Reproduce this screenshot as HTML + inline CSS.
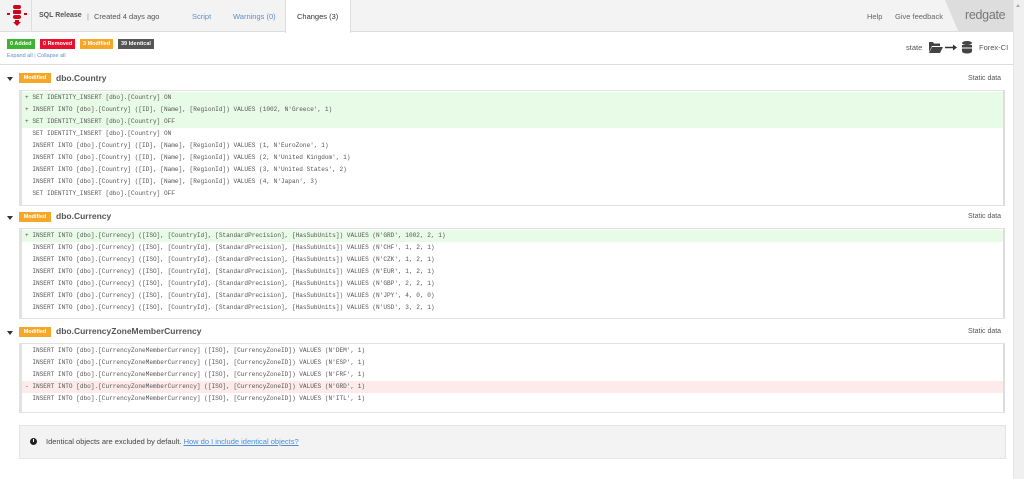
<!DOCTYPE html>
<html><head><meta charset="utf-8"><style>
*{margin:0;padding:0;box-sizing:border-box}
body{width:1024px;height:479px;overflow:hidden;background:#fff;font-family:"Liberation Sans",sans-serif;position:relative;color:#333}
.a{position:absolute}
.hdr{left:0;top:0;width:1013px;height:32px;background:#f3f3f3;border-bottom:1px solid #ddd}
.t{font-size:7.5px;white-space:nowrap}
.badge{position:absolute;top:39px;height:10px;font-size:5.5px;font-weight:bold;color:#fff;line-height:10px;padding:0 3px}
.mod{position:absolute;left:19px;background:#f7a728;color:#fff;font-size:5.5px;font-weight:bold;width:32px;height:10px;line-height:10px;text-align:center}
.name{position:absolute;left:56px;font-size:8.5px;font-weight:bold;color:#555}
.sd{position:absolute;font-size:7px;color:#555}
.tri{position:absolute;left:7px;width:0;height:0;border-left:3px solid transparent;border-right:3px solid transparent;border-top:4px solid #333}
.box{position:absolute;left:19px;width:986px;border:1px solid #e2e2e2;border-left:3px solid #e2e2e2;border-right:2px solid #ddd;padding-top:1px;font-family:"Liberation Mono",monospace;font-size:6.1px;color:#555}
.box div{height:12px;line-height:12px;padding-left:3px;white-space:pre}
.g{background:#e8fbe6}.r{background:#fdebeb}
</style></head><body>
<div class="a hdr"></div>
<div class="a" style="left:0;top:0;width:32px;height:32px;border-right:1px solid #ddd"></div>
<svg class="a" style="left:5px;top:3px" width="24" height="24" viewBox="0 0 24 24">
<rect x="8" y="2" width="8" height="4" rx="2" fill="#d0021b"/><rect x="8" y="7" width="8" height="4" rx="1" fill="#d0021b"/><rect x="8" y="12" width="8" height="4" rx="2" fill="#d0021b"/>
<rect x="2" y="10" width="3" height="2" fill="#d0021b"/><rect x="19" y="10" width="3" height="2" fill="#d0021b"/>
<path d="M10 17h4v2h2l-4 4-4-4h2z" fill="#d0021b"/></svg>
<div class="a t" style="left:39px;top:12px;font-weight:bold;color:#555;font-size:7px">SQL Release</div>
<div class="a t" style="left:87px;top:12px;color:#999">|</div>
<div class="a t" style="left:94px;top:12px;color:#555">Created 4 days ago</div>
<div class="a t" style="left:192px;top:12px;color:#5b8fc7">Script</div>
<div class="a t" style="left:233px;top:12px;color:#5b8fc7">Warnings (0)</div>
<div class="a" style="left:285px;top:0;width:66px;height:33px;background:#fff;border-left:1px solid #ddd;border-right:1px solid #ddd"></div>
<div class="a t" style="left:297px;top:12px;color:#333">Changes (3)</div>
<div class="a t" style="left:867px;top:12px;color:#666">Help</div>
<div class="a t" style="left:895px;top:12px;color:#666">Give feedback</div>
<div class="a" style="left:945px;top:0;width:68px;height:32px;background:#ddd;clip-path:polygon(0 0,100% 0,100% 100%,20% 100%)"></div>
<div class="a" style="left:965px;top:8px;font-size:12.5px;color:#777;letter-spacing:-0.3px">redgate</div>
<div class="a" style="left:1013px;top:0;width:11px;height:479px;background:#f0f0f0;border-left:1px solid #e4e4e4"></div>
<div class="a" style="left:1016px;top:4px;width:0;height:0;border-left:2px solid transparent;border-right:2px solid transparent;border-bottom:3px solid #aaa"></div>

<div class="badge" style="left:7px;background:#3db331">0 Added</div>
<div class="badge" style="left:40px;background:#e8102f">0 Removed</div>
<div class="badge" style="left:80px;background:#f7a728">3 Modified</div>
<div class="badge" style="left:118px;background:#555">39 Identical</div>
<div class="a" style="left:7px;top:53px;font-size:5.5px;color:#5b8fc7">Expand all <span style="color:#aaa">|</span> Collapse all</div>
<div class="a t" style="left:906px;top:43px;color:#555">state</div>
<svg class="a" style="left:928px;top:40px" width="50" height="14" viewBox="0 0 50 14"><path d="M1 2h4l1 1.5h6v2.5H4L1 12z" fill="#444"/><path d="M4 7h11l-3 6H1z" fill="#444"/><path d="M17 7.5h9" stroke="#333" stroke-width="1.5"/><path d="M25 4.5l4 3-4 3z" fill="#333"/><ellipse cx="39" cy="3" rx="5" ry="2" fill="#444"/><rect x="34" y="5" width="10" height="2.5" fill="#444"/><rect x="34" y="8.5" width="10" height="2.5" fill="#444"/><ellipse cx="39" cy="11.5" rx="5" ry="2" fill="#444"/></svg>
<div class="a t" style="left:979px;top:43px;color:#555">Forex-CI</div>
<div class="a" style="left:0;top:64px;width:1013px;height:1px;background:#ddd"></div>

<div class="tri" style="top:77px"></div><div class="mod" style="top:73px">Modified</div><div class="name" style="top:73px">dbo.Country</div><div class="sd" style="top:75px;left:968px">Static data</div>
<div class="box" style="top:90px;height:116px">
<div class="g">+ SET IDENTITY_INSERT [dbo].[Country] ON</div>
<div class="g">+ INSERT INTO [dbo].[Country] ([ID], [Name], [RegionId]) VALUES (1002, N'Greece', 1)</div>
<div class="g">+ SET IDENTITY_INSERT [dbo].[Country] OFF</div>
<div>  SET IDENTITY_INSERT [dbo].[Country] ON</div>
<div>  INSERT INTO [dbo].[Country] ([ID], [Name], [RegionId]) VALUES (1, N'EuroZone', 1)</div>
<div>  INSERT INTO [dbo].[Country] ([ID], [Name], [RegionId]) VALUES (2, N'United Kingdom', 1)</div>
<div>  INSERT INTO [dbo].[Country] ([ID], [Name], [RegionId]) VALUES (3, N'United States', 2)</div>
<div>  INSERT INTO [dbo].[Country] ([ID], [Name], [RegionId]) VALUES (4, N'Japan', 3)</div>
<div>  SET IDENTITY_INSERT [dbo].[Country] OFF</div>
</div>

<div class="tri" style="top:216px"></div><div class="mod" style="top:212px">Modified</div><div class="name" style="top:211px">dbo.Currency</div><div class="sd" style="top:213px;left:968px">Static data</div>
<div class="box" style="top:228px;height:91px">
<div class="g">+ INSERT INTO [dbo].[Currency] ([ISO], [CountryId], [StandardPrecision], [HasSubUnits]) VALUES (N'GRD', 1002, 2, 1)</div>
<div>  INSERT INTO [dbo].[Currency] ([ISO], [CountryId], [StandardPrecision], [HasSubUnits]) VALUES (N'CHF', 1, 2, 1)</div>
<div>  INSERT INTO [dbo].[Currency] ([ISO], [CountryId], [StandardPrecision], [HasSubUnits]) VALUES (N'CZK', 1, 2, 1)</div>
<div>  INSERT INTO [dbo].[Currency] ([ISO], [CountryId], [StandardPrecision], [HasSubUnits]) VALUES (N'EUR', 1, 2, 1)</div>
<div>  INSERT INTO [dbo].[Currency] ([ISO], [CountryId], [StandardPrecision], [HasSubUnits]) VALUES (N'GBP', 2, 2, 1)</div>
<div>  INSERT INTO [dbo].[Currency] ([ISO], [CountryId], [StandardPrecision], [HasSubUnits]) VALUES (N'JPY', 4, 0, 0)</div>
<div>  INSERT INTO [dbo].[Currency] ([ISO], [CountryId], [StandardPrecision], [HasSubUnits]) VALUES (N'USD', 3, 2, 1)</div>
</div>

<div class="tri" style="top:331px"></div><div class="mod" style="top:327px">Modified</div><div class="name" style="top:326px">dbo.CurrencyZoneMemberCurrency</div><div class="sd" style="top:328px;left:968px">Static data</div>
<div class="box" style="top:343px;height:70px">
<div>  INSERT INTO [dbo].[CurrencyZoneMemberCurrency] ([ISO], [CurrencyZoneID]) VALUES (N'DEM', 1)</div>
<div>  INSERT INTO [dbo].[CurrencyZoneMemberCurrency] ([ISO], [CurrencyZoneID]) VALUES (N'ESP', 1)</div>
<div>  INSERT INTO [dbo].[CurrencyZoneMemberCurrency] ([ISO], [CurrencyZoneID]) VALUES (N'FRF', 1)</div>
<div class="r">- INSERT INTO [dbo].[CurrencyZoneMemberCurrency] ([ISO], [CurrencyZoneID]) VALUES (N'GRD', 1)</div>
<div>  INSERT INTO [dbo].[CurrencyZoneMemberCurrency] ([ISO], [CurrencyZoneID]) VALUES (N'ITL', 1)</div>
</div>

<div class="a" style="left:19px;top:425px;width:987px;height:34px;background:#f3f3f3;border:1px solid #e4e4e4"></div>
<div class="a" style="left:30px;top:438px;width:7px;height:7px;border-radius:50%;background:#222"></div>
<div class="a" style="left:33px;top:439px;width:1px;height:3px;background:#fff"></div>
<div class="a t" style="left:46px;top:437px;color:#444">Identical objects are excluded by default. <span style="color:#4a8fd9;text-decoration:underline">How do I include identical objects?</span></div>
</body></html>
